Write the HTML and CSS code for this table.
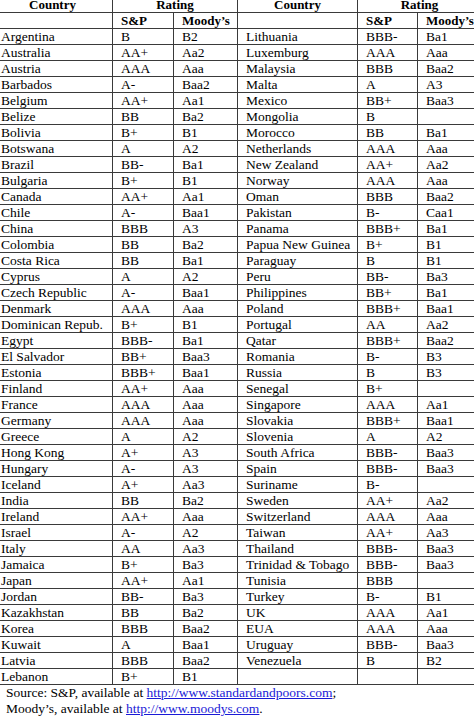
FILE: index.html
```html
<!DOCTYPE html>
<html lang="en">
<head>
<meta charset="utf-8">
<title>Sovereign ratings</title>
<link rel="stylesheet" href="styles.css">
</head>
<body>
<table class="ratings">
  <colgroup>
    <col class="c-country"><col class="c-sp"><col class="c-md">
    <col class="c-country2"><col class="c-sp2"><col class="c-md">
  </colgroup>
  <thead>
    <tr><th>Country</th><th colspan="2">Rating</th><th>Country</th><th colspan="2">Rating</th></tr>
    <tr><th></th><th>S&amp;P</th><th>Moody’s</th><th></th><th>S&amp;P</th><th>Moody’s</th></tr>
  </thead>
  <tbody>
    <tr><td>Argentina</td><td>B</td><td>B2</td><td>Lithuania</td><td>BBB-</td><td>Ba1</td></tr>
    <tr><td>Australia</td><td>AA+</td><td>Aa2</td><td>Luxemburg</td><td>AAA</td><td>Aaa</td></tr>
    <tr><td>Austria</td><td>AAA</td><td>Aaa</td><td>Malaysia</td><td>BBB</td><td>Baa2</td></tr>
    <tr><td>Barbados</td><td>A-</td><td>Baa2</td><td>Malta</td><td>A</td><td>A3</td></tr>
    <tr><td>Belgium</td><td>AA+</td><td>Aa1</td><td>Mexico</td><td>BB+</td><td>Baa3</td></tr>
    <tr><td>Belize</td><td>BB</td><td>Ba2</td><td>Mongolia</td><td>B</td><td></td></tr>
    <tr><td>Bolivia</td><td>B+</td><td>B1</td><td>Morocco</td><td>BB</td><td>Ba1</td></tr>
    <tr><td>Botswana</td><td>A</td><td>A2</td><td>Netherlands</td><td>AAA</td><td>Aaa</td></tr>
    <tr><td>Brazil</td><td>BB-</td><td>Ba1</td><td>New Zealand</td><td>AA+</td><td>Aa2</td></tr>
    <tr><td>Bulgaria</td><td>B+</td><td>B1</td><td>Norway</td><td>AAA</td><td>Aaa</td></tr>
    <tr><td>Canada</td><td>AA+</td><td>Aa1</td><td>Oman</td><td>BBB</td><td>Baa2</td></tr>
    <tr><td>Chile</td><td>A-</td><td>Baa1</td><td>Pakistan</td><td>B-</td><td>Caa1</td></tr>
    <tr><td>China</td><td>BBB</td><td>A3</td><td>Panama</td><td>BBB+</td><td>Ba1</td></tr>
    <tr><td>Colombia</td><td>BB</td><td>Ba2</td><td>Papua New Guinea</td><td>B+</td><td>B1</td></tr>
    <tr><td>Costa Rica</td><td>BB</td><td>Ba1</td><td>Paraguay</td><td>B</td><td>B1</td></tr>
    <tr><td>Cyprus</td><td>A</td><td>A2</td><td>Peru</td><td>BB-</td><td>Ba3</td></tr>
    <tr><td>Czech Republic</td><td>A-</td><td>Baa1</td><td>Philippines</td><td>BB+</td><td>Ba1</td></tr>
    <tr><td>Denmark</td><td>AAA</td><td>Aaa</td><td>Poland</td><td>BBB+</td><td>Baa1</td></tr>
    <tr><td>Dominican Repub.</td><td>B+</td><td>B1</td><td>Portugal</td><td>AA</td><td>Aa2</td></tr>
    <tr><td>Egypt</td><td>BBB-</td><td>Ba1</td><td>Qatar</td><td>BBB+</td><td>Baa2</td></tr>
    <tr><td>El Salvador</td><td>BB+</td><td>Baa3</td><td>Romania</td><td>B-</td><td>B3</td></tr>
    <tr><td>Estonia</td><td>BBB+</td><td>Baa1</td><td>Russia</td><td>B</td><td>B3</td></tr>
    <tr><td>Finland</td><td>AA+</td><td>Aaa</td><td>Senegal</td><td>B+</td><td></td></tr>
    <tr><td>France</td><td>AAA</td><td>Aaa</td><td>Singapore</td><td>AAA</td><td>Aa1</td></tr>
    <tr><td>Germany</td><td>AAA</td><td>Aaa</td><td>Slovakia</td><td>BBB+</td><td>Baa1</td></tr>
    <tr><td>Greece</td><td>A</td><td>A2</td><td>Slovenia</td><td>A</td><td>A2</td></tr>
    <tr><td>Hong Kong</td><td>A+</td><td>A3</td><td>South Africa</td><td>BBB-</td><td>Baa3</td></tr>
    <tr><td>Hungary</td><td>A-</td><td>A3</td><td>Spain</td><td>BBB-</td><td>Baa3</td></tr>
    <tr><td>Iceland</td><td>A+</td><td>Aa3</td><td>Suriname</td><td>B-</td><td></td></tr>
    <tr><td>India</td><td>BB</td><td>Ba2</td><td>Sweden</td><td>AA+</td><td>Aa2</td></tr>
    <tr><td>Ireland</td><td>AA+</td><td>Aaa</td><td>Switzerland</td><td>AAA</td><td>Aaa</td></tr>
    <tr><td>Israel</td><td>A-</td><td>A2</td><td>Taiwan</td><td>AA+</td><td>Aa3</td></tr>
    <tr><td>Italy</td><td>AA</td><td>Aa3</td><td>Thailand</td><td>BBB-</td><td>Baa3</td></tr>
    <tr><td>Jamaica</td><td>B+</td><td>Ba3</td><td>Trinidad &amp; Tobago</td><td>BBB-</td><td>Baa3</td></tr>
    <tr><td>Japan</td><td>AA+</td><td>Aa1</td><td>Tunisia</td><td>BBB</td><td></td></tr>
    <tr><td>Jordan</td><td>BB-</td><td>Ba3</td><td>Turkey</td><td>B-</td><td>B1</td></tr>
    <tr><td>Kazakhstan</td><td>BB</td><td>Ba2</td><td>UK</td><td>AAA</td><td>Aa1</td></tr>
    <tr><td>Korea</td><td>BBB</td><td>Baa2</td><td>EUA</td><td>AAA</td><td>Aaa</td></tr>
    <tr><td>Kuwait</td><td>A</td><td>Baa1</td><td>Uruguay</td><td>BBB-</td><td>Baa3</td></tr>
    <tr><td>Latvia</td><td>BBB</td><td>Baa2</td><td>Venezuela</td><td>B</td><td>B2</td></tr>
    <tr><td>Lebanon</td><td>B+</td><td>B1</td><td></td><td></td><td></td></tr>
  </tbody>
</table>
<p class="source">Source: S&amp;P, available at <a href="#">http://www.standardandpoors.com</a>;<br>Moody’s, available at <a href="#">http://www.moodys.com</a>.</p>
</body>
</html>
```
FILE: styles.css
```css
html, body {
  margin: 0;
  padding: 0;
  background: #fff;
  overflow: hidden;
}
body {
  font-family: "Liberation Serif", "Times New Roman", serif;
  font-size: 13.5px;
  color: #000;
}
.ratings {
  border-collapse: collapse;
  table-layout: fixed;
  width: 489px;
  margin: -4px 0 0 -8px;
}
.c-country { width: 120px; }
.c-sp { width: 61px; }
.c-md { width: 64px; }
.c-country2 { width: 120px; }
.c-sp2 { width: 60px; }
.ratings th,
.ratings td {
  border: 1px solid #3a3a3a;
  padding: 0 0 0 8px;
  line-height: 15px;
  height: 15px;
  text-align: left;
  white-space: nowrap;
  overflow: hidden;
  font-weight: normal;
}
.ratings th {
  font-weight: bold;
  font-size: 13px;
}
.ratings thead tr:first-child th {
  text-align: center;
  padding: 0;
}
.source {
  margin: 0;
  padding-left: 6px;
  line-height: 16px;
}
.source a {
  color: #1a1ad6;
  text-decoration: underline;
}
```
